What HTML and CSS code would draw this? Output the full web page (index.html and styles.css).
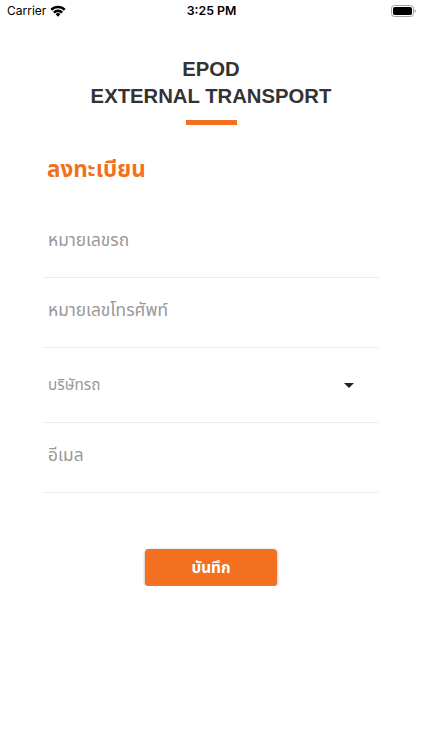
FILE: index.html
```html
<!DOCTYPE html>
<html lang="th">
<head>
<meta charset="utf-8">
<title>EPOD External Transport</title>
<link rel="stylesheet" href="styles.css">
</head>
<body>
<header class="status">
  <div class="carrier"><span>Carrier</span>
    <svg class="wifi" width="16" height="12" viewBox="0 0 16 12"><path d="M8 11.8 5.6 9.3a3.4 3.4 0 0 1 4.8 0zM4.8 8.5 3 6.7a7 7 0 0 1 10 0l-1.8 1.8a4.5 4.5 0 0 0-6.4 0zM2.2 5.8.4 4a10.7 10.7 0 0 1 15.2 0l-1.8 1.8a8.1 8.1 0 0 0-11.6 0z"/></svg>
  </div>
  <time>3:25 PM</time>
  <svg class="battery" width="25" height="12" viewBox="0 0 25 12"><rect x=".5" y=".5" width="22" height="11" rx="3" fill="none" stroke="#a3a3a3"/><rect x="2" y="2" width="19" height="8" rx="1.8"/><path d="M23.6 4v4q1.2-.6 1.2-2t-1.2-2z" fill="#999"/></svg>
</header>
<main>
  <h1><span>EPOD</span><span>EXTERNAL TRANSPORT</span></h1>
  <div class="accent"></div>
  <form>
    <h2>ลงทะเบียน</h2>
    <div class="field">หมายเลขรถ</div>
    <div class="field">หมายเลขโทรศัพท์</div>
    <div class="field company"><span>บริษัทรถ</span><svg width="10" height="5" viewBox="0 0 10 5"><path d="M0 0h10L5 5z"/></svg></div>
    <div class="field">อีเมล</div>
    <button type="button"><span>บันทึก</span></button>
  </form>
</main>
</body>
</html>
```
FILE: styles.css
```css
* { box-sizing: border-box; }
body { margin: 0; background: #fff; color: #333; font-family: "Noto Sans", "Noto Sans Thai", sans-serif; }
.status { height: 22px; padding: 0 6px 0 7px; display: grid; grid-template-columns: 1fr auto 1fr; align-items: center; font: 12px/22px Inter, sans-serif; color: #000; }
.carrier { display: flex; align-items: center; gap: 4px; }
.carrier svg { margin-top: -1px; }
time { font-weight: 600; font-size: 12.3px; }
.battery { justify-self: end; margin-top: -1px; }
h1 { margin: 34px 0 0; display: flex; flex-direction: column; align-items: center; font: 700 20.3px/27px "Liberation Sans", sans-serif; }
.accent { width: 51px; height: 5px; margin: 10px auto 0; background: #f37021; }
form { width: 336px; margin: 0 auto; padding-top: 26px; display: flex; flex-direction: column; }
h2 { margin: 0 0 22px 4px; height: 35px; font-size: 22.4px; line-height: 35px; color: #f37021; }
.field { height: 70px; padding: 0 5px; border-bottom: 1px solid #ececec; font-size: 17.3px; line-height: 64px; color: #999; }
.company { height: 75px; padding-right: 25px; font-size: 15.3px; display: flex; justify-content: space-between; align-items: center; }
.company span { line-height: 70px; padding-bottom: 2px; }
.company svg { fill: #222; margin-top: 1px; }
button { width: 132px; height: 37px; margin: 56px auto 0; padding: 0; border: 0; border-radius: 4px; background: #f37021; color: #fff; font: 700 15.4px/37px "Noto Sans", "Noto Sans Thai", sans-serif; box-shadow: 0 1px 3px #0006; }
button span { display: block; height: 37px; }
```
